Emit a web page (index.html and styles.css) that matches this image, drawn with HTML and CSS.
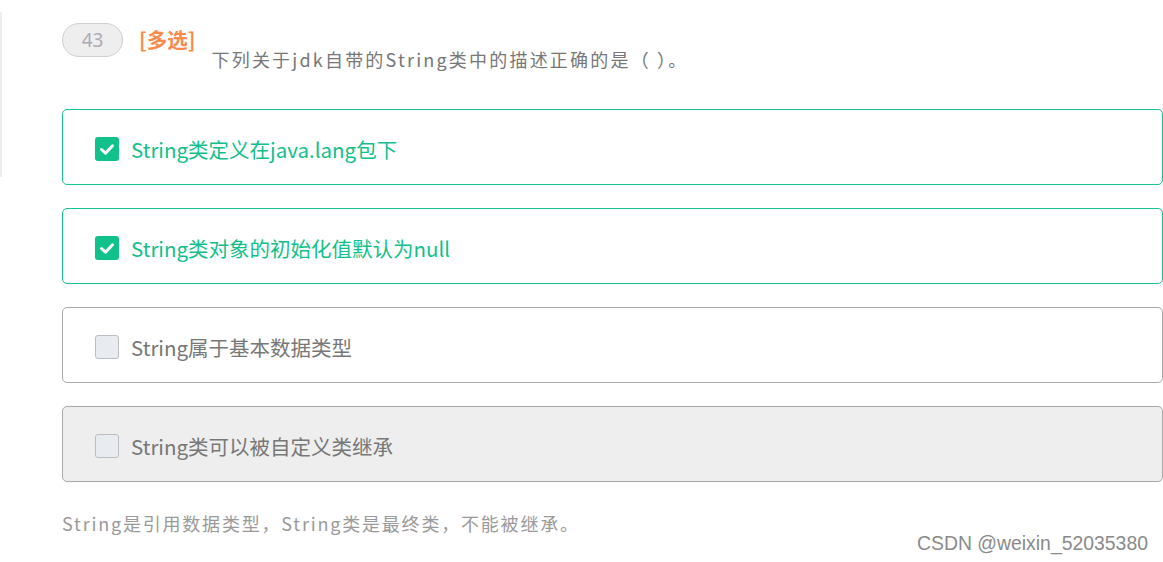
FILE: index.html
```html
<!DOCTYPE html>
<html lang="zh-CN">
<head>
<meta charset="utf-8">
<title>题目 43</title>
<link rel="stylesheet" href="styles.css">
</head>
<body>
<div class="page">
  <div class="edge"></div>
  <main class="question">
    <div class="head">
      <span class="num">43</span>
      <span class="tag">[多选]</span>
      <span class="stem">下列关于jdk自带的String类中的描述正确的是（ ）。</span>
    </div>
    <ul class="options">
      <li class="option checked">
        <span class="box"><svg viewBox="0 0 24 24" width="24" height="24"><path d="M6.5 12.5 L10.5 16.2 L17.5 8.8" fill="none" stroke="#fff" stroke-width="3" stroke-linecap="round" stroke-linejoin="round"/></svg></span>
        <span class="label">String类定义在java.lang包下</span>
      </li>
      <li class="option checked">
        <span class="box"><svg viewBox="0 0 24 24" width="24" height="24"><path d="M6.5 12.5 L10.5 16.2 L17.5 8.8" fill="none" stroke="#fff" stroke-width="3" stroke-linecap="round" stroke-linejoin="round"/></svg></span>
        <span class="label">String类对象的初始化值默认为null</span>
      </li>
      <li class="option">
        <span class="box"></span>
        <span class="label">String属于基本数据类型</span>
      </li>
      <li class="option missed">
        <span class="box"></span>
        <span class="label">String类可以被自定义类继承</span>
      </li>
    </ul>
    <p class="explain">String是引用数据类型，String类是最终类，不能被继承。</p>
  </main>
</div>
<div class="watermark">CSDN @weixin_52035380</div>
</body>
</html>
```

FILE: styles.css
```css
html, body {
  margin: 0;
  padding: 0;
  background: #fff;
  font-family: "Noto Sans", "Noto Sans CJK SC", sans-serif;
  overflow: hidden;
}
.page {
  display: flex;
  width: 1163px;
  height: 562px;
}
.edge {
  width: 2px;
  height: 165px;
  margin-top: 12px;
  background: #eeeeee;
  flex: none;
}
.question {
  flex: 1;
  padding-left: 60px;
  padding-top: 23px;
}
.head {
  display: flex;
  align-items: flex-start;
}
.num {
  box-sizing: border-box;
  width: 61px;
  height: 34px;
  border: 1px solid #cfcfcf;
  border-radius: 17px;
  background: #eeeeee;
  color: #b0aab5;
  font-size: 19px;
  line-height: 32px;
  text-align: center;
}
.tag {
  margin-left: 16px;
  margin-top: 2px;
  color: #fa8a4c;
  font-weight: bold;
  font-size: 20.5px;
  line-height: 28px;
  font-family: "Noto Sans CJK SC", sans-serif;
}
.stem {
  margin-left: 16px;
  margin-top: 24px;
  color: #777;
  font-size: 18px;
  line-height: 24px;
  letter-spacing: 2.2px;
  font-family: "Noto Sans CJK SC", sans-serif;
}
.options {
  list-style: none;
  margin: 38px 0 0;
  padding: 0;
  display: flex;
  flex-direction: column;
  gap: 23px;
}
.option {
  box-sizing: border-box;
  height: 76px;
  border: 1px solid #a9a9a9;
  border-radius: 5px;
  display: flex;
  align-items: center;
  padding: 3px 0 0 32px;
  color: #777;
}
.option.checked {
  border-color: #17c38f;
  color: #12bf8b;
}
.option.missed {
  background: #eeeeee;
}
.box {
  box-sizing: border-box;
  width: 24px;
  height: 24px;
  border-radius: 3px;
  border: 1px solid #b9bec4;
  background: #e8ecf0;
  flex: none;
  display: flex;
}
.option.checked .box {
  border: none;
  background: #10c18c;
}
.label {
  margin-left: 12px;
  font-size: 20.5px;
  line-height: 26px;
  font-family: "Noto Sans CJK SC", sans-serif;
}
.explain {
  margin: 29px 0 0;
  color: #9a9a9a;
  font-size: 18px;
  line-height: 24px;
  letter-spacing: 1.8px;
  font-family: "Noto Sans CJK SC", sans-serif;
}
.watermark {
  position: absolute;
  left: 917px;
  top: 530px;
  color: #8a8a8a;
  font-family: "Liberation Sans", Arial, sans-serif;
  font-size: 19.4px;
  line-height: 26px;
}
```
